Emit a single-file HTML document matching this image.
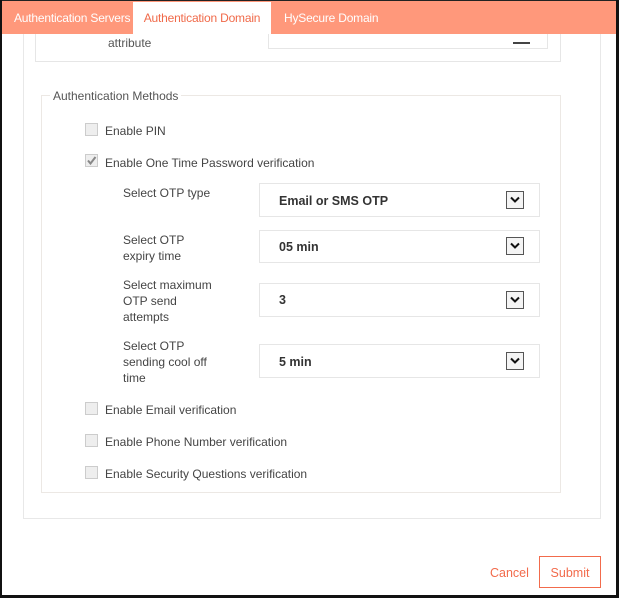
<!DOCTYPE html>
<html><head><style>
*{box-sizing:border-box;margin:0;padding:0}
body{width:619px;height:598px;position:relative;background:#fff;font-family:"Liberation Sans",sans-serif;font-size:12px;color:#444;overflow:hidden}
.a{position:absolute}
.tabs{left:0;top:0;width:616px;height:34px;background:#ff987b;border-top:1px solid #222}
.tab{position:absolute;top:11px;color:#fff;font-size:12px;letter-spacing:-0.2px;white-space:nowrap}
.act{position:absolute;left:133px;top:2px;width:138px;height:32px;background:#fff;color:#f06a4a;font-size:12px;letter-spacing:-0.2px;padding-top:9px;text-align:center;white-space:nowrap}
.cb{position:absolute;left:85px;width:13px;height:13px;border:1px solid #ccc;background:#eee}
.lbl{position:absolute;left:105px}
.sel{position:absolute;left:259px;width:281px;border:1px solid #e6e6e6;background:#fff}
.sel b{position:absolute;left:19px;font-size:12.5px;color:#333}
.arr{position:absolute;left:246px;width:18px;height:18px;border:1px solid #555;background:#f4f4f4}
.arr svg{position:absolute;left:3px;top:4px}
.sl{position:absolute;left:123px;line-height:16px}
</style></head><body>
<div class="a tabs"></div>
<div class="tab" style="left:14px">Authentication Servers</div>
<div class="act">Authentication Domain</div>
<div class="tab" style="left:284px">HySecure Domain</div>
<div class="a" style="left:23px;top:34px;width:578px;height:485px;border:1px solid #e8e8e8;border-top:none"></div>
<div class="a" style="left:35px;top:34px;width:526px;height:28px;border:1px solid #e6e6e6;border-top:none"></div>
<div class="a" style="left:268px;top:34px;width:280px;height:15px;border:1px solid #e6e6e6;border-top:none"></div>
<div class="a" style="left:513px;top:42px;width:17px;height:2px;background:#444"></div>
<div class="a" style="left:108px;top:36px;color:#555">attribute</div>
<div class="a" style="left:0;top:34px;width:616px;height:3px;background:#fff"></div>
<div class="a" style="left:23px;top:34px;width:1px;height:3px;background:#e8e8e8"></div>
<div class="a" style="left:600px;top:34px;width:1px;height:3px;background:#e8e8e8"></div>
<div class="a" style="left:35px;top:34px;width:1px;height:3px;background:#e6e6e6"></div>
<div class="a" style="left:560px;top:34px;width:1px;height:3px;background:#e6e6e6"></div>
<div class="a" style="left:268px;top:34px;width:1px;height:3px;background:#e6e6e6"></div>
<div class="a" style="left:547px;top:34px;width:1px;height:3px;background:#e6e6e6"></div>
<div class="a" style="left:41px;top:95px;width:520px;height:398px;border:1px solid #ece8e4"></div>
<div class="a" style="left:50px;top:89px;background:#fff;padding:0 3px;color:#555">Authentication Methods</div>
<div class="cb" style="top:123px"></div><div class="lbl" style="top:124px">Enable PIN</div>
<div class="cb" style="top:154px"><svg width="13" height="13" style="position:absolute;left:-1px;top:-1px"><path d="M3 6.5l2.5 3L10.5 3" stroke="#888" stroke-width="2" fill="none"/></svg></div>
<div class="lbl" style="top:156px">Enable One Time Password verification</div>
<div class="sl" style="top:185px">Select OTP type</div>
<div class="sel" style="top:183px;height:34px"><b style="top:10px">Email or SMS OTP</b><div class="arr" style="top:7px"><svg width="10" height="8"><path d="M1 1.5l4 4 4-4" stroke="#111" stroke-width="2" fill="none"/></svg></div></div>
<div class="sl" style="top:232px">Select OTP<br>expiry time</div>
<div class="sel" style="top:230px;height:33px"><b style="top:9px">05 min</b><div class="arr" style="top:6px"><svg width="10" height="8"><path d="M1 1.5l4 4 4-4" stroke="#111" stroke-width="2" fill="none"/></svg></div></div>
<div class="sl" style="top:277px">Select maximum<br>OTP send<br>attempts</div>
<div class="sel" style="top:283px;height:34px"><b style="top:9px">3</b><div class="arr" style="top:7px"><svg width="10" height="8"><path d="M1 1.5l4 4 4-4" stroke="#111" stroke-width="2" fill="none"/></svg></div></div>
<div class="sl" style="top:338px">Select OTP<br>sending cool off<br>time</div>
<div class="sel" style="top:344px;height:34px"><b style="top:10px">5 min</b><div class="arr" style="top:7px"><svg width="10" height="8"><path d="M1 1.5l4 4 4-4" stroke="#111" stroke-width="2" fill="none"/></svg></div></div>
<div class="cb" style="top:402px"></div><div class="lbl" style="top:403px">Enable Email verification</div>
<div class="cb" style="top:434px"></div><div class="lbl" style="top:435px">Enable Phone Number verification</div>
<div class="cb" style="top:466px"></div><div class="lbl" style="top:467px">Enable Security Questions verification</div>
<div class="a" style="left:490px;top:566px;color:#f26b4c;font-size:12.5px">Cancel</div>
<div class="a" style="left:539px;top:556px;width:62px;height:32px;border:1px solid #f26b4c;color:#f26b4c;font-size:12.5px;text-align:center;padding-top:9px">Submit</div>
<div class="a" style="left:0;top:0;width:2px;height:598px;background:#111"></div>
<div class="a" style="left:616px;top:0;width:3px;height:598px;background:#111"></div>
<div class="a" style="left:0;top:595px;width:619px;height:3px;background:#111"></div>
</body></html>
